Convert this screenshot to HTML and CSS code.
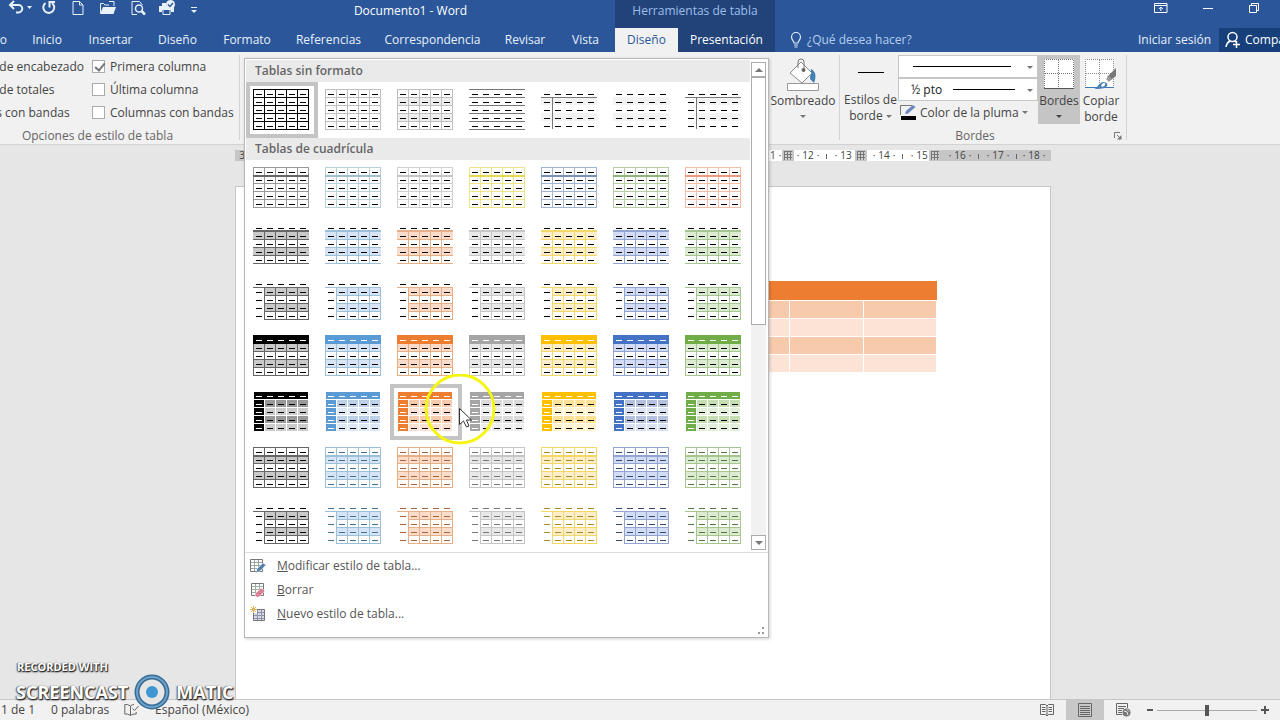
FILE: index.html
```
<!DOCTYPE html>
<html lang="es">
<head>
    <meta charset="UTF-8">
    <meta name="viewport" content="width=device-width, initial-scale=1.0">
    <title>Documento1 - Word</title>
    <link rel="stylesheet" href="styles.css">
</head>
<body>
    <!-- Barra de título -->
    <header class="titlebar">
        <div class="quick-access">
            <button class="icon-btn undo" aria-label="Deshacer">
                <svg width="24" height="16" viewBox="0 0 24 16"><path d="M6 1L2 5l4 4M2 5h8.500a3.500 3.500 0 0 1 0 7.500H8" fill="none" stroke="#e8f0fa" stroke-width="2"/><path d="M19 6h5l-2.500 3z" fill="#e8f0fa"/></svg>
            </button>
            <button class="icon-btn" aria-label="Rehacer">
                <svg width="16" height="16" viewBox="0 0 16 16"><path d="M4.500 3A5.500 5.500 0 1 0 11 3" fill="none" stroke="#e8f0fa" stroke-width="2"/><path d="M8.500 7.500V2H14" fill="none" stroke="#e8f0fa" stroke-width="2"/></svg>
            </button>
            <button class="icon-btn" aria-label="Nuevo">
                <svg width="16" height="16" viewBox="0 0 16 16"><path d="M3 1.500h6.500l3.500 3.500v9.500H3zM9.500 1.500V5H13" fill="none" stroke="#e8f0fa"/></svg>
            </button>
            <button class="icon-btn" aria-label="Abrir">
                <svg width="18" height="16" viewBox="0 0 18 16"><path d="M1.500 13V3.500h3L6 5h4M10 1.500h5V6" fill="none" stroke="#e8f0fa"/><path d="M4 7h13l-2.500 7H1z" fill="#e8f0fa"/></svg>
            </button>
            <button class="icon-btn" aria-label="Vista previa">
                <svg width="16" height="16" viewBox="0 0 16 16"><path d="M7 14.500H2v-13h7.500L12.500 5" fill="none" stroke="#e8f0fa"/><circle cx="9" cy="8.500" r="3.500" fill="none" stroke="#e8f0fa" stroke-width="1.500"/><path d="M11.500 11l3.500 3.500" stroke="#e8f0fa" stroke-width="2.500"/></svg>
            </button>
            <button class="icon-btn" aria-label="Impresión rápida">
                <svg width="18" height="16" viewBox="0 0 18 16"><path d="M0 6h15v6h-3v-2H3v2H0zM3 3h4v3H3z" fill="#e8f0fa"/><path d="M4 9.500h7v5H4z" fill="#2b579a" stroke="#e8f0fa"/><circle cx="11.500" cy="4.500" r="4.500" fill="#e8f0fa"/><path d="M9 4.500l2 2 3-3.500" fill="none" stroke="#2b579a" stroke-width="1.300"/></svg>
            </button>
            <button class="icon-btn customize" aria-label="Personalizar">
                <svg width="8" height="8" viewBox="0 0 8 8"><path d="M1 1.500h6" stroke="#e8f0fa"/><path d="M1 4h6L4 7z" fill="#e8f0fa"/></svg>
            </button>
        </div>
        <div class="doc-title">Documento1 - Word</div>
        <div class="context-title">Herramientas de tabla</div>
        <div class="window-buttons">
            <button class="icon-btn" aria-label="Opciones de la cinta">
                <svg width="14" height="12" viewBox="0 0 14 12"><path d="M.5 1.500h12.500v9H.5zM.5 3.500h12.500M6.800 9V5M4.800 7l2-2 2 2" fill="none" stroke="#fff"/></svg>
            </button>
            <button class="icon-btn" aria-label="Minimizar">
                <svg width="12" height="12" viewBox="0 0 12 12"><path d="M1 6.500h10" stroke="#fff"/></svg>
            </button>
            <button class="icon-btn" aria-label="Restaurar">
                <svg width="12" height="12" viewBox="0 0 12 12"><path d="M1.500 3.500h7v7h-7zM3.500 3.500v-2h7v7h-2" fill="none" stroke="#fff"/></svg>
            </button>
        </div>
    </header>

    <!-- Pestañas -->
    <nav class="tabs">
        <a href="#" class="tab file">Archivo</a>
        <a href="#" class="tab">Inicio</a>
        <a href="#" class="tab">Insertar</a>
        <a href="#" class="tab">Diseño</a>
        <a href="#" class="tab">Formato</a>
        <a href="#" class="tab">Referencias</a>
        <a href="#" class="tab">Correspondencia</a>
        <a href="#" class="tab">Revisar</a>
        <a href="#" class="tab">Vista</a>
        <a href="#" class="tab active">Diseño</a>
        <a href="#" class="tab context">Presentación</a>
        <div class="tell-me">
            <svg width="12" height="16" viewBox="0 0 12 16"><path d="M4 11c0-2-2.500-3-2.500-6a4.500 4.500 0 0 1 9 0c0 3-2.500 4-2.500 6zM4 13h4M4.500 15h3" fill="none" stroke="#dce8f8" stroke-width="1.200"/></svg>
            <span>¿Qué desea hacer?</span>
        </div>
        <a href="#" class="sign-in">Iniciar sesión</a>
        <button class="share">
            <svg width="16" height="18" viewBox="0 0 16 18"><circle cx="7.500" cy="6" r="4.500" fill="none" stroke="#fff" stroke-width="1.500"/><path d="M1 16c.5-3 2-5 4-6M9.500 10l1.500 1M11.500 10v7M8 13.500h7" fill="none" stroke="#fff" stroke-width="1.500"/></svg>
            <span>Compartir</span>
        </button>
    </nav>

    <!-- Cinta -->
    <section class="ribbon">
        <div class="group options">
            <div class="option-columns">
                <div class="option-col first">
                    <label><input type="checkbox" checked>Fila de encabezado</label>
                    <label><input type="checkbox">Fila de totales</label>
                    <label><input type="checkbox" checked>Filas con bandas</label>
                </div>
                <div class="option-col">
                    <label><input type="checkbox" checked>Primera columna</label>
                    <label><input type="checkbox">Última columna</label>
                    <label><input type="checkbox">Columnas con bandas</label>
                </div>
            </div>
            <div class="group-name">Opciones de estilo de tabla</div>
        </div>

        <div class="group styles">
            <button class="big-btn shading">
                <svg width="34" height="34" viewBox="0 0 34 34"><path d="M25 11c4 2 6 6 3 14l-4-4z" fill="#3f81b5"/><path d="M15 4l11 11-10 10L4 15z" fill="#fff" stroke="#8a8a8a"/><path d="M12 10V4q0-3 3-3t3 3v8" fill="none" stroke="#777"/><circle cx="17.500" cy="12" r="2" fill="#666"/><path d="M1.500 25.500h31v7h-31z" fill="#fff" stroke="#999"/></svg>
                <span>Sombreado</span>
                <i class="caret"></i>
            </button>
        </div>

        <div class="group borders">
            <div class="borders-row">
                <button class="big-btn border-style">
                    <span class="line-icon"></span>
                    <span>Estilos de<br>borde <i class="caret"></i></span>
                </button>
                <div class="pen">
                    <div class="combo line"><select aria-label="Estilo de pluma"><option></option></select></div>
                    <div class="combo weight"><select aria-label="Grosor de pluma"><option>½ pto</option></select></div>
                    <button class="pen-color">
                        <svg width="17" height="17" viewBox="0 0 17 17"><path d="M.5 11V1.500H12" fill="none" stroke="#777"/><path d="M5 10l1-3 7-6 2.500 2L8 9.500z" fill="#6b86bd"/><path d="M1 12h15v4H1z" fill="#000"/></svg>
                        Color de la pluma <i class="caret"></i>
                    </button>
                </div>
                <button class="big-btn pressed">
                    <svg width="30" height="30" viewBox="0 0 30 30"><path d="M0 0h30v30H0z" fill="#fff"/><path d="M.5 29V.5h29V29M14.500 1v28M1 14.500h28" fill="none" stroke="#777" stroke-dasharray="1 1"/><path d="M0 29.500h30" stroke="#555"/></svg>
                    <span>Bordes</span>
                    <i class="caret dark"></i>
                </button>
                <button class="big-btn copy-border">
                    <svg width="32" height="30" viewBox="0 0 32 30"><path d="M0 0h29v29H0z" fill="#fff"/><path d="M.5 29V.5h28V29M14.500 1v28M1 14.500h28" fill="none" stroke="#888" stroke-dasharray="1 1"/><path d="M0 28.500h29" stroke="#3f78ad"/><path d="M31 9v8l-5 4-4-3z" fill="#777"/><path d="M24 17l3 3-3 3-3-3z" fill="#999"/><path d="M9 30c4-1 4-6 9-7 4 0 6 3 3 5-3 2-8 2-12 2z" fill="#4a82b8"/><path d="M17 25c2-2 4-1 3 1s-3 2-4 1z" fill="#fff"/></svg>
                    <span>Copiar<br>borde</span>
                </button>
            </div>
            <div class="group-name">Bordes</div>
            <button class="launcher" aria-label="Bordes y sombreado">
                <svg width="8" height="8" viewBox="0 0 8 8"><path d="M.5 6V.5H6M3 3l3 3" fill="none" stroke="#777"/><path d="M7.500 3v4.500H3z" fill="#777"/></svg>
            </button>
        </div>
    </section>

    <!-- Documento -->
    <main class="workspace">
        <div class="ruler">
            <span class="num margin-left">3</span>
            <span class="num">11</span>
            <span class="num">12</span>
            <span class="num">13</span>
            <span class="num">14</span>
            <span class="num">15</span>
            <span class="num gray">16</span>
            <span class="num gray">17</span>
            <span class="num gray">18</span>
            <i class="col-mark m1"></i>
            <i class="col-mark m2"></i>
            <i class="col-mark m3"></i>
        </div>
        <div class="page">
            <table class="doc-table" aria-label="Tabla del documento">
                <thead>
                    <tr><th></th><th></th><th></th><th></th><th></th><th></th><th></th><th></th></tr>
                </thead>
                <tbody>
                    <tr><td></td><td></td><td></td><td></td><td></td><td></td><td></td><td></td></tr>
                    <tr><td></td><td></td><td></td><td></td><td></td><td></td><td></td><td></td></tr>
                    <tr><td></td><td></td><td></td><td></td><td></td><td></td><td></td><td></td></tr>
                    <tr><td></td><td></td><td></td><td></td><td></td><td></td><td></td><td></td></tr>
                </tbody>
            </table>
        </div>
    </main>

    <!-- Barra de estado -->
    <footer class="statusbar">
        <span class="pages">1 de 1</span>
        <span class="words">0 palabras</span>
        <svg class="proof" width="15" height="14" viewBox="0 0 15 14"><path d="M6.500 3v9.500M6.500 3Q4 1 .8 1.500v9.500q3-.5 5.700 1.500 2-1.800 5.700-1.500V9M6.500 3Q8 1.500 10 1.500M8.500 5.500l2 2 4-4.500" fill="none" stroke="#666"/></svg>
        <span class="language">Español (México)</span>
        <div class="views">
            <button class="view" aria-label="Modo de lectura">
                <svg width="14" height="14" viewBox="0 0 14 14"><path d="M.5 1.500h5L7 3l1.500-1.500h5v10h-5L7 13l-1.500-1.500h-5zM7 3v10M2 4.500h3.500M2 6.500h3.500M2 8.500h3.500M8.500 4.500H12M8.500 6.500H12M8.500 8.500H12" fill="none" stroke="#666"/></svg>
            </button>
            <button class="view current" aria-label="Diseño de impresión">
                <svg width="14" height="14" viewBox="0 0 14 14"><path d="M.5.5h13v13H.5zM2 3.500h10M2 5.500h10M2 7.500h10M2 9.500h10M2 11.500h10" fill="none" stroke="#666"/></svg>
            </button>
            <button class="view" aria-label="Diseño web">
                <svg width="15" height="14" viewBox="0 0 15 14"><path d="M6 11.500H.5v-11h11V5M2 3.500h8M2 5.500h6M2 7.500h4M2 9.500h4" fill="none" stroke="#666"/><circle cx="10.500" cy="9.500" r="4" fill="#777"/><path d="M8 8l3 1 1 3M11 6.500l2 2" fill="none" stroke="#eee"/></svg>
            </button>
        </div>
        <div class="zoom">
            <button aria-label="Alejar"><svg width="6" height="8" viewBox="0 0 6 8"><path d="M0 4h6" stroke="#555" stroke-width="2"/></svg></button>
            <input type="range" min="10" max="190" value="100" aria-label="Zoom">
            <button aria-label="Acercar"><svg width="8" height="8" viewBox="0 0 8 8"><path d="M0 4h8M4 0v8" stroke="#555" stroke-width="2"/></svg></button>
        </div>
    </footer>

    <!-- Galería de estilos de tabla -->
    <div class="gallery">
        <div class="gallery-body">
            <div class="gallery-list">
                <h2>Tablas sin formato</h2>
                <div class="thumbs" id="plain-thumbs"></div>
                <h2>Tablas de cuadrícula</h2>
                <div class="thumbs" id="grid-thumbs"></div>
            </div>
            <div class="scrollbar">
                <button class="scroll-btn" aria-label="Subir"><i class="caret up"></i></button>
                <div class="scroll-thumb"></div>
                <button class="scroll-btn bottom" aria-label="Bajar"><i class="caret wide"></i></button>
            </div>
        </div>
        <div class="gallery-menu">
            <button>
                <svg width="16" height="16" viewBox="0 0 16 16"><path d="M.5 1.500h12v12H.5z" fill="#fff" stroke="#777"/><path d="M1 4.500h11M1 7.500h11M1 10.500h11M4.500 2v11M8.500 2v11" stroke="#9aa5a0"/><path d="M6 15l1-4 6-6 3 2-6 6z" fill="#4f7fae" stroke="#fff" stroke-width=".5"/></svg>
                <span><u>M</u>odificar estilo de tabla...</span>
            </button>
            <button>
                <svg width="16" height="16" viewBox="0 0 16 16"><path d="M1.500 1.500h12v12h-12z" fill="#fff" stroke="#777"/><path d="M2 4.500h11M2 7.500h11M2 10.500h11M5.500 2v11M9.500 2v11" stroke="#9ab0a0"/><path d="M5 12l6-6 4 3-6 6H6z" fill="#dc8098" stroke="#fff" stroke-width=".5"/></svg>
                <span><u>B</u>orrar</span>
            </button>
            <button>
                <svg width="16" height="16" viewBox="0 0 16 16"><path d="M3.500 3.500h11v11h-11z" fill="#d8dae8" stroke="#777"/><path d="M4 6.500h10M4 9.500h10M4 12.500h10M7.500 4v10M11.500 4v10" stroke="#8f93a8"/><path d="M0 0h7v7H0z" fill="#fff"/><path d="M3.500 0v7M0 3.500h7M1 1l5 5M6 1L1 6" stroke="#e0b45c"/></svg>
                <span><u>N</u>uevo estilo de tabla...</span>
            </button>
        </div>
        <svg class="grip" width="8" height="8" viewBox="0 0 8 8"><path d="M5 0h2v2H5zM5 5h2v2H5zM1 5h2v2H1z" fill="#999"/></svg>
    </div>

    <!-- Puntero resaltado -->
    <svg class="pointer" width="72" height="72" viewBox="0 0 72 72">
        <circle cx="36" cy="35" r="34" fill="none" stroke="#f5f514" stroke-width="3"/>
        <path d="M35.500 34.500v16l4-3.500 3 6 2.500-1-2.500-6h5z" fill="#fff" stroke="#333"/>
    </svg>

    <!-- Marca de agua -->
    <div class="watermark">
        <div class="wm-small">RECORDED WITH</div>
        <div class="wm-big">
            <span>SCREENCAST</span>
            <svg width="36" height="36" viewBox="0 0 36 36"><circle cx="18" cy="18" r="15" fill="#e6e6e6" stroke="#3a6c94" stroke-width="5"/><circle cx="18" cy="18" r="15" fill="none" stroke="#6ba3cc" stroke-width="2"/><circle cx="18" cy="18" r="6" fill="#3f96d2"/></svg>
            <span>MATIC</span>
        </div>
    </div>

    <script src="gallery.js"></script>
</body>
</html>
```
FILE: styles.css
```
* {
    box-sizing: border-box;
}
body {
    margin: 0;
    height: 100vh;
    display: flex;
    flex-direction: column;
    overflow: hidden;
    position: relative;
    font-family: 'Open Sans', 'Noto Sans', sans-serif;
    font-size: 12px;
    line-height: 16px;
    color: #444;
    background: #e6e6e6;
}
button {
    font: inherit;
    color: inherit;
    background: none;
    border: none;
    padding: 0;
}
a {
    color: inherit;
    text-decoration: none;
}
svg {
    display: block;
    flex: none;
}
.caret {
    display: inline-block;
    border: 3px solid transparent;
    border-top-color: #777;
    border-bottom: none;
    vertical-align: middle;
}
.caret.dark {
    border-top-color: #444;
}
.caret.wide {
    border-width: 4px 4px 0;
}
.caret.up {
    border-width: 0 4px 4px;
    border-color: transparent transparent #777;
    border-style: solid;
}

/* barra de título */
.titlebar {
    display: grid;
    grid-template-columns: 206px 409px 160px 1fr;
    height: 28px;
    flex: none;
    background: #2b579a;
    color: #fff;
}
.quick-access {
    display: flex;
    align-items: flex-start;
    gap: 13px;
    padding-left: 8px;
}
.icon-btn.undo {
    margin-right: -4px;
}
.icon-btn.customize {
    padding-top: 6px;
}
.doc-title,
.context-title {
    text-align: center;
    padding-top: 3px;
}
.context-title {
    background: #21437a;
    color: #9fbfe8;
}
.window-buttons {
    display: flex;
    justify-content: flex-end;
    align-items: flex-start;
    gap: 34px;
    padding: 2px 20px 0 0;
}

/* pestañas */
.tabs {
    display: grid;
    grid-template-columns: 18px 58px 69px 65px 74px 89px 119px 66px 55px 65px 97px 1fr auto 61px;
    height: 24px;
    flex: none;
    line-height: 24px;
    background: #2b579a;
    color: #e8f0fa;
}
.tab {
    text-align: center;
    white-space: nowrap;
}
.tab.file {
    display: flex;
    justify-content: flex-end;
    padding-right: 11px;
}
.tab.active {
    margin-left: 2px;
    background: #f1f1f1;
    color: #2b579a;
}
.tab.context {
    background: #21437a;
    color: #fff;
}
.tell-me {
    display: flex;
    align-items: center;
    gap: 5px;
    padding-left: 15px;
    color: #b4cdee;
}
.sign-in {
    padding-right: 8px;
}
.share {
    display: flex;
    align-items: center;
    gap: 4px;
    padding-left: 6px;
    overflow: hidden;
    background: #173f7a;
    color: #fff;
}

/* cinta */
.ribbon {
    display: flex;
    height: 93px;
    flex: none;
    padding: 3px 0 4px;
    background: #f1f1f1;
    border-bottom: 1px solid #d2d2d2;
}
.group {
    position: relative;
    display: flex;
    flex-direction: column;
    justify-content: space-between;
    border-right: 1px solid #d4d4d4;
}
.group-name {
    text-align: center;
    line-height: 8px;
    color: #666;
}
.options {
    width: 240px;
}
.options .group-name {
    padding-right: 44px;
}
.option-columns {
    display: flex;
    justify-content: flex-end;
    gap: 8px;
    padding-right: 10px;
}
.option-col {
    display: flex;
    flex-direction: column;
    width: 137px;
}
.option-col.first {
    width: auto;
}
.option-col label {
    display: flex;
    align-items: center;
    gap: 5px;
    height: 23px;
    white-space: nowrap;
}
.option-col input {
    appearance: none;
    width: 13px;
    height: 13px;
    margin: 0;
    flex: none;
    background: #fff;
    border: 1px solid #ababab;
}
.option-col input:checked::before {
    content: '';
    display: block;
    width: 4px;
    height: 8px;
    margin: 0 0 0 4px;
    border: solid #777;
    border-width: 0 2px 2px 0;
    transform: rotate(40deg);
}
.styles {
    width: 600px;
    align-items: flex-end;
}
.big-btn {
    display: flex;
    flex-direction: column;
    align-items: center;
    height: 69px;
}
.shading {
    width: 68px;
    margin-right: 2px;
    padding-top: 3px;
    gap: 1px;
}
.shading .caret {
    margin-top: 5px;
}
.borders {
    width: 287px;
}
.borders .group-name {
    padding-right: 16px;
}
.borders-row {
    display: flex;
}
.border-style {
    width: 58px;
    padding-left: 3px;
}
.line-icon {
    width: 26px;
    height: 19px;
    margin-bottom: 19px;
    border-bottom: 1px solid #000;
}
.pen {
    width: 140px;
}
.combo {
    position: relative;
    height: 23px;
    background: #fff;
    border: 1px solid #c6c6c6;
}
.combo select {
    appearance: none;
    width: 100%;
    height: 100%;
    padding: 0 0 0 12px;
    border: none;
    background: none;
    font: inherit;
    color: #222;
}
.combo::before {
    content: '';
    position: absolute;
    right: 26px;
    top: 10px;
    width: 98px;
    height: 1px;
    background: #000;
}
.combo.weight::before {
    right: 22px;
    width: 62px;
}
.combo::after {
    content: '';
    position: absolute;
    right: 4px;
    top: 10px;
    border: 3px solid transparent;
    border-top-color: #777;
    border-bottom: none;
}
.pen-color {
    display: flex;
    align-items: center;
    gap: 3px;
    height: 23px;
    padding-left: 2px;
    white-space: nowrap;
}
.pressed {
    width: 42px;
    padding-top: 4px;
    gap: 4px;
    background: #c5c5c5;
}
.pressed .caret {
    margin-top: 2px;
}
.copy-border {
    width: 42px;
    padding-top: 4px;
    gap: 4px;
}
.launcher {
    position: absolute;
    right: 4px;
    bottom: 0;
}

/* documento */
.workspace {
    flex: 1;
    min-height: 0;
    display: flex;
    flex-direction: column;
    padding: 5px 229px 0 235px;
}
.ruler {
    position: relative;
    display: flex;
    flex: none;
    height: 11px;
    overflow: hidden;
    background: #fff;
    font-size: 10px;
    line-height: 11px;
    justify-content: flex-end;
}
.num {
    position: relative;
    width: 38px;
    flex: none;
    text-align: center;
}
.num::before {
    content: '·';
    margin-right: 3px;
}
.num::after {
    content: '·';
    margin-left: 3px;
}
.num + .num {
    background: linear-gradient(#666, #666) right 4px / 1px 5px no-repeat;
}
.num.gray {
    background-color: #c6c6c6;
}
.num:nth-child(9) {
    width: 34px;
    background-image: none;
}
.margin-left {
    width: 14px;
    margin-right: auto;
    background: #c6c6c6;
}
.margin-left::before,
.margin-left::after {
    content: none;
}
.col-mark {
    position: absolute;
    top: 0;
    width: 12px;
    height: 11px;
    border: solid #c6c6c6;
    border-width: 1px 2px;
    background: repeating-linear-gradient(90deg, #777 0 1px, transparent 1px 3px), repeating-linear-gradient(#777 0 1px, #d0d0d0 1px 3px);
}
.m1 {
    right: 257px;
}
.m2 {
    right: 184px;
}
.m3 {
    right: 110px;
}
.page {
    flex: 1;
    margin-top: 25px;
    padding: 94px 113px 0;
    background: #fff;
    border: 1px solid #c6c6c6;
    border-bottom: none;
}
.doc-table {
    width: 100%;
    border-collapse: collapse;
    table-layout: fixed;
}
.doc-table th {
    height: 19px;
    padding: 0;
    background: #ed7d31;
}
.doc-table td {
    height: 18px;
    padding: 0;
    border: 1px solid #fff;
    background: #fbe4d5;
}
.doc-table tr:nth-child(odd) td {
    background: #f7caac;
}

/* barra de estado */
.statusbar {
    display: flex;
    align-items: center;
    height: 21px;
    flex: none;
    background: #f1f1f1;
    border-top: 1px solid #c6c6c6;
}
.pages {
    width: 51px;
    padding-left: 1px;
}
.words {
    width: 73px;
}
.language {
    margin-left: 16px;
}
.views {
    display: flex;
    align-self: stretch;
    margin-left: auto;
}
.view {
    display: flex;
    align-items: center;
    justify-content: center;
    width: 38px;
}
.view.current {
    background: #c8c8c8;
}
.zoom {
    display: flex;
    align-items: center;
    gap: 4px;
    padding: 0 11px 0 5px;
}
.zoom input {
    appearance: none;
    width: 100px;
    height: 12px;
    margin: 0;
    background: linear-gradient(#ababab, #ababab) center / 100% 1px no-repeat;
}
.zoom input::-webkit-slider-thumb {
    appearance: none;
    width: 4px;
    height: 11px;
    background: #555;
}

/* galería */
.gallery {
    position: absolute;
    left: 244px;
    top: 58px;
    width: 525px;
    background: #fff;
    border: 1px solid #b8b8b8;
    box-shadow: 1px 1px 3px rgba(0,0,0,0.2);
}
.gallery-body {
    display: flex;
    padding: 1px 2px 0 1px;
    border-bottom: 1px solid #dcdcdc;
}
.gallery-list {
    flex: 1;
}
.gallery h2 {
    margin: 0;
    height: 22px;
    padding-left: 9px;
    font-size: 12px;
    line-height: 22px;
    font-weight: 600;
    color: #666;
    background: #eaeaea;
}
.thumbs {
    display: grid;
    grid-template-columns: repeat(7, 72px);
    grid-auto-rows: 56px;
}
.thumb {
    display: flex;
    align-items: flex-start;
    padding: 3px;
    border: 4px solid transparent;
}
.thumb.selected {
    border-color: #c4c4c4;
}
.scrollbar {
    display: flex;
    flex-direction: column;
    width: 15px;
    margin: 2px 0 2px 1px;
    background: #f1f1f1;
}
.scroll-btn {
    display: flex;
    align-items: center;
    justify-content: center;
    height: 15px;
    flex: none;
    background: #fff;
    border: 1px solid #ababab;
}
.scroll-btn.bottom {
    margin-top: auto;
}
.scroll-thumb {
    height: 248px;
    background: #fff;
    border: 1px solid #ababab;
}
.gallery-menu {
    padding: 1px 0 11px;
}
.gallery-menu button {
    display: flex;
    align-items: center;
    gap: 11px;
    width: 100%;
    height: 24px;
    padding-left: 5px;
    color: #555;
}
.grip {
    position: absolute;
    right: 3px;
    bottom: 2px;
}

.pointer {
    position: absolute;
    left: 424px;
    top: 374px;
    pointer-events: none;
}

/* marca de agua */
.watermark {
    position: absolute;
    left: 16px;
    bottom: 10px;
    font-weight: bold;
    color: #fff;
    text-shadow: 1px 1px 1px #222, -1px 0 1px #666, 0 1px 2px #222;
}
.wm-small {
    font-size: 11px;
    line-height: 14px;
    padding-left: 1px;
}
.wm-big {
    display: flex;
    align-items: center;
    gap: 6px;
    font-size: 18px;
    line-height: 36px;
}
```
FILE: gallery.js
```
// Miniaturas de 5x5 celdas de 11x8
const W = 11;
const H = 8;

// linea, banda, relleno, guion de color, banda oscura y clara
const themes = [
    { line: '#666', band: '#c8c8c8', fill: '#000', dash: '#000', dark: '#999', light: '#ccc' },
    { line: '#9cc0d8', band: '#d6e4f5', fill: '#5b9bd5', dash: '#44708c', dark: '#bdd0ea', light: '#dde8f5' },
    { line: '#e5b088', band: '#fbdcca', fill: '#ed7d31', dash: '#a8633a', dark: '#f7caac', light: '#fbe0d2' },
    { line: '#c6c6c6', band: '#e8e8e8', fill: '#a5a5a5', dash: '#777', dark: '#dadada', light: '#ededed' },
    { line: '#f3d868', band: '#fdeecb', fill: '#ffc000', dash: '#a98a22', dark: '#ffe296', light: '#fff2cc' },
    { line: '#91a5d0', band: '#d2dcf5', fill: '#4472c4', dash: '#34486e', dark: '#b4c2e0', light: '#dae2f1' },
    { line: '#a5c690', band: '#dcebd2', fill: '#70ad47', dash: '#557544', dark: '#c5dfb3', light: '#e2efd9' }
];
const softLines = ['#999', '#b8d0dc', '#d0d0d0', '#eee48a', '#a2b4d4', '#b5cda5', '#f2bda6'];
const softHeads = ['#666', '#a0c0d0', '#c4c4c4', '#e8d84c', '#7b90b8', '#8fb57a', '#ec9b7c'];

function rect(x, y, w, h, color) {
    return `<rect x="${x}" y="${y}" width="${w}" height="${h}" fill="${color}"/>`;
}

function bands(x, color) {
    return rect(x, H, 56 - x, H, color) + rect(x, H * 3, 56 - x, H, color);
}

function hLines(x, y, color) {
    let out = '';
    for (; y <= 40; y += H) out += rect(x, y, 56 - x, 1, color);
    return out;
}

function vLines(from, to, y, color) {
    let out = '';
    for (let i = from; i <= to; i++) out += rect(i * W, y, 1, 41 - y, color);
    return out;
}

function dashes(color, head, first) {
    let out = '';
    for (let r = 0; r < 5; r++) {
        for (let c = 0; c < 5; c++) {
            let col = color;
            if (r === 0 && head) col = head;
            if (c === 0 && first) col = first;
            out += rect(c * W + 3, r * H + 5, 6, 1, col);
        }
    }
    return out;
}

function addThumb(id, name, shapes, selected) {
    const cls = selected ? 'thumb selected' : 'thumb';
    document.getElementById(id).insertAdjacentHTML('beforeend',
        `<button class="${cls}" aria-label="${name}"><svg width="56" height="41" shape-rendering="crispEdges">${shapes}</svg></button>`);
}

const box = color => hLines(0, 0, color) + vLines(0, 5, 0, color);
const corner = rect(0, H, 56, 1, '#777') + rect(W, H, 1, 32, '#777');

// Tablas sin formato
const plain = [
    box('#000'),
    box('#bfbfbf'),
    bands(0, '#eee') + box('#bfbfbf'),
    hLines(0, 0, '#777'),
    bands(0, '#f3f3f3') + corner,
    bands(0, '#f3f3f3'),
    bands(W, '#f3f3f3') + corner
];
plain.forEach((shapes, i) => addThumb('plain-thumbs', 'Tabla sin formato ' + i, shapes + dashes('#000'), i === 0));

// Tablas de cuadrícula
const rows = [
    (t, i) => box(softLines[i]) + rect(0, H, 56, 2, softHeads[i]) + dashes('#000'),
    t => bands(0, t.band) + hLines(0, H, t.line) + rect(0, H - 1, 56, 2, t.line) + vLines(1, 4, H, t.line) + dashes('#000'),
    t => bands(W, t.band) + hLines(W, H, t.line) + rect(0, H, W, 1, t.line) + vLines(1, 5, H, t.line) + dashes('#000'),
    t => bands(0, t.band) + box(t.line) + rect(0, 0, 56, 9, t.fill) + dashes('#000', '#fff'),
    t => rect(0, 0, 56, 40, t.light) + bands(0, t.dark) + rect(0, 0, 56, 8, t.fill) + rect(0, 0, W, 40, t.fill) +
        hLines(0, H, '#fff') + rect(0, H, 1, 33, '#fff') + rect(0, 0, 1, 41, '#fff') + rect(55, 0, 1, 41, '#fff') + rect(0, 0, 56, 1, '#fff') +
        vLines(1, 4, H, '#fff') + dashes('#000', '#fff', '#fff'),
    t => bands(0, t.band) + box(t.line) + rect(0, H, 56, 2, t.line) + dashes(t.dash),
    t => bands(W, t.band) + hLines(W, H, t.line) + rect(0, H, W, 1, t.line) + vLines(1, 5, H, t.line) + dashes(t.dash)
];
rows.forEach((draw, r) => {
    themes.forEach((t, i) => {
        addThumb('grid-thumbs', `Tabla de cuadrícula ${r + 1}, ${i + 1}`, draw(t, i), r === 4 && i === 2);
    });
});
```
